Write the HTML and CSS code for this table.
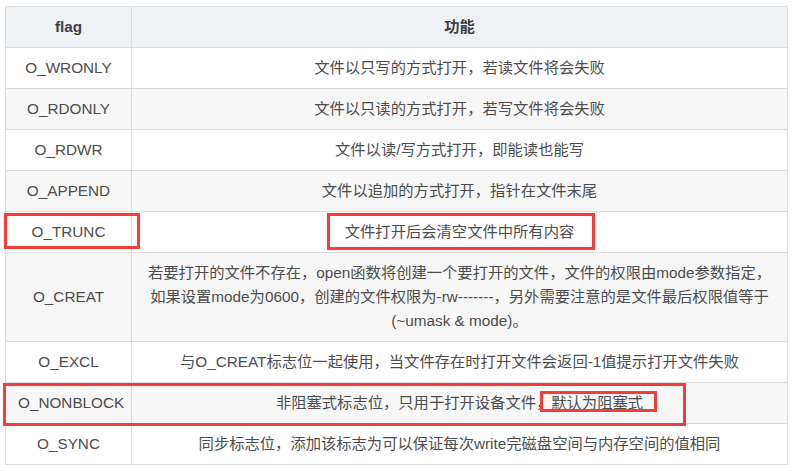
FILE: index.html
```html
<!DOCTYPE html>
<html lang="zh-CN">
<head>
  <meta charset="UTF-8">
  <title>open flags</title>
  <link rel="stylesheet" href="styles.css">
</head>
<body>
  <div class="sheet">
    <table class="flags">
      <colgroup>
        <col class="col-flag">
        <col>
      </colgroup>
      <thead>
        <tr>
          <th>flag</th>
          <th>功能</th>
        </tr>
      </thead>
      <tbody>
        <tr><td>O_WRONLY</td><td>文件以只写的方式打开，若读文件将会失败</td></tr>
        <tr><td>O_RDONLY</td><td>文件以只读的方式打开，若写文件将会失败</td></tr>
        <tr><td>O_RDWR</td><td>文件以读/写方式打开，即能读也能写</td></tr>
        <tr><td>O_APPEND</td><td>文件以追加的方式打开，指针在文件末尾</td></tr>
        <tr><td>O_TRUNC</td><td>文件打开后会清空文件中所有内容</td></tr>
        <tr><td>O_CREAT</td><td>若要打开的文件不存在，open函数将创建一个要打开的文件，文件的权限由mode参数指定，如果设置mode为0600，创建的文件权限为-rw-------，另外需要注意的是文件最后权限值等于(~umask &amp; mode)。</td></tr>
        <tr><td>O_EXCL</td><td>与O_CREAT标志位一起使用，当文件存在时打开文件会返回-1值提示打开文件失败</td></tr>
        <tr><td>O_NONBLOCK</td><td>非阻塞式标志位，只用于打开设备文件，默认为阻塞式</td></tr>
        <tr><td>O_SYNC</td><td>同步标志位，添加该标志为可以保证每次write完磁盘空间与内存空间的值相同</td></tr>
      </tbody>
    </table>

    <!-- annotation boxes drawn over the table -->
    <div class="mark mark-trunc-flag"></div>
    <div class="mark mark-trunc-text"></div>
    <div class="mark mark-nonblock-row"></div>
    <div class="mark mark-nonblock-text"></div>
  </div>
</body>
</html>
```

FILE: styles.css
```css
body {
  margin: 0;
  background-color: #fff;
  font-family: 'Liberation Sans', 'Noto Sans CJK SC', sans-serif;
  color: #4d4d4d;
}
.sheet {
  position: relative;
  padding: 6px 0 0 5px;
}
.flags {
  width: 783px;
  table-layout: fixed;
  border-collapse: collapse;
  font-size: 15.3px;
  line-height: 24px;
}
.flags .col-flag {
  width: 126px;
}
.flags th,
.flags td {
  border: 1px solid #dddddd;
  padding: 8px 12px;
  text-align: center;
  font-weight: normal;
}
.flags th {
  background-color: #eff2f5;
  color: #3f3f3f;
  font-weight: bold;
}
.flags tbody tr:nth-child(even) {
  background-color: #f7f7f7;
}
.flags td:last-child {
  padding: 8px 10px;
}
.mark {
  position: absolute;
  box-sizing: border-box;
  border: 3px solid #f73b3b;
}
.mark-trunc-flag {
  left: 4px;
  top: 213px;
  width: 136px;
  height: 36px;
}
.mark-trunc-text {
  left: 327px;
  top: 213px;
  width: 268px;
  height: 37px;
}
.mark-nonblock-row {
  left: 3px;
  top: 383px;
  width: 683px;
  height: 43px;
}
.mark-nonblock-text {
  left: 540px;
  top: 391px;
  width: 117px;
  height: 21px;
}
```
